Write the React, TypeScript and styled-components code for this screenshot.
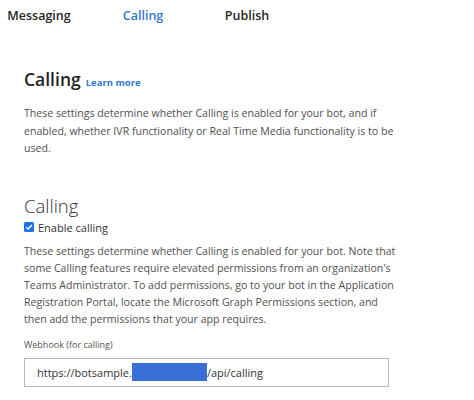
import React from "react";
import styled, { createGlobalStyle } from "styled-components";

const GlobalStyle = createGlobalStyle`
  body {
    margin: 0;
    background: #fff;
    font-family: "Open Sans", "Noto Sans", sans-serif;
  }
`;

const Page = styled.div`
  width: 474px;
  height: 400px;
  overflow: hidden;
  background: #fff;
`;

const TabBar = styled.div`
  display: flex;
  margin-left: -13px;
  padding-top: 6px;
  height: 22px;
`;

const Tab = styled.div<{ active?: boolean }>`
  width: 104px;
  text-align: center;
  font-size: 12.5px;
  font-weight: 600;
  line-height: 20px;
  color: ${(p) => (p.active ? "#2f7ad0" : "#262626")};
`;

const Content = styled.div`
  padding: 38px 0 0 24px;
  width: 400px;
`;

const TitleRow = styled.div`
  display: flex;
  align-items: baseline;
  gap: 5px;
`;

const Title = styled.h2`
  margin: 0;
  font-size: 17.5px;
  font-weight: 600;
  color: #1f1f1f;
  line-height: 26px;
`;

const LearnMore = styled.a`
  font-size: 9.5px;
  font-weight: 700;
  color: #2f7ad0;
  text-decoration: none;
`;

const Text = styled.p`
  margin: 0;
  font-size: 10.6px;
  line-height: 17.5px;
  color: #505050;
`;

const Intro = styled(Text)`
  margin-top: 13px;
`;

const SectionTitle = styled.h3`
  margin: 36px 0 0;
  font-size: 18.5px;
  font-weight: 300;
  color: #333;
  line-height: 24px;
`;

const CheckRow = styled.label`
  display: flex;
  align-items: center;
  gap: 4px;
  margin-top: 1px;
  font-size: 11px;
  color: #333;
  line-height: 17px;
`;

const Box = styled.span`
  width: 10px;
  height: 10px;
  border-radius: 1.5px;
  background: #1b73e8;
  display: flex;
  align-items: center;
  justify-content: center;
`;

const Details = styled(Text)`
  margin-top: 7px;
  line-height: 17.1px;
`;

const FieldLabel = styled.div`
  margin-top: 10px;
  font-size: 9px;
  color: #555;
  line-height: 14px;
`;

const Input = styled.div`
  margin-top: 6px;
  width: 365px;
  height: 29px;
  box-sizing: border-box;
  border: 1px solid #b9b9b9;
  display: flex;
  align-items: center;
  padding-left: 12px;
  font-size: 11px;
  color: #333;
`;

const Redacted = styled.span`
  display: inline-block;
  width: 75px;
  height: 18px;
  background: #3a6fd8;
`;

export default function App() {
  return (
    <Page>
      <GlobalStyle />
      <TabBar>
        <Tab>Messaging</Tab>
        <Tab active>Calling</Tab>
        <Tab>Publish</Tab>
      </TabBar>
      <Content>
        <TitleRow>
          <Title>Calling</Title>
          <LearnMore href="#">Learn more</LearnMore>
        </TitleRow>
        <Intro>
          These settings determine whether Calling is enabled for your bot, and if
          <br />
          enabled, whether IVR functionality or Real Time Media functionality is to be
          <br />
          used.
        </Intro>
        <SectionTitle>Calling</SectionTitle>
        <CheckRow>
          <Box>
            <svg width="8" height="8" viewBox="0 0 10 10">
              <path d="M1.5 5.2 L4 7.6 L8.6 2.4" fill="none" stroke="#fff" strokeWidth="1.8" />
            </svg>
          </Box>
          Enable calling
        </CheckRow>
        <Details>
          These settings determine whether Calling is enabled for your bot. Note that
          <br />
          some Calling features require elevated permissions from an organization's
          <br />
          Teams Administrator. To add permissions, go to your bot in the Application
          <br />
          Registration Portal, locate the Microsoft Graph Permissions section, and
          <br />
          then add the permissions that your app requires.
        </Details>
        <FieldLabel>Webhook (for calling)</FieldLabel>
        <Input>
          https://botsample.<Redacted />/api/calling
        </Input>
      </Content>
    </Page>
  );
}
